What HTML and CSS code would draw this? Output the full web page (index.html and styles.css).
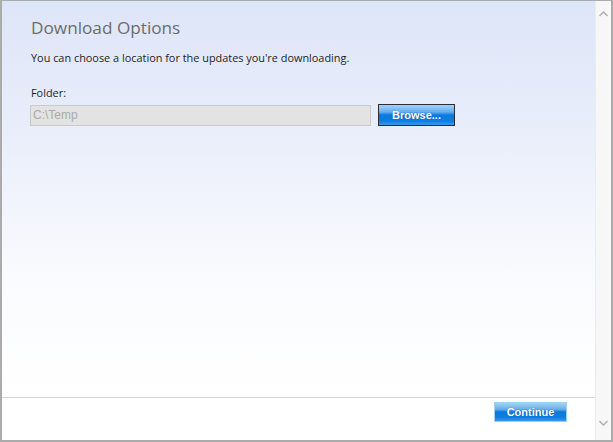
FILE: index.html
```html
<!DOCTYPE html>
<html>
<head>
<meta charset="utf-8">
<link rel="stylesheet" href="styles.css">
</head>
<body>
<div class="window">
  <div class="main">
    <div class="content">
      <h1 class="title">Download Options</h1>
      <p class="intro">You can choose a location for the updates you're downloading.</p>
      <label class="label">Folder:</label>
      <div class="folder-row">
        <div class="input">C:\Temp</div>
        <button class="btn btn-focus">Browse...</button>
      </div>
    </div>
    <div class="footer">
      <button class="btn btn-continue">Continue</button>
    </div>
  </div>
  <div class="scrollbar">
    <svg class="arrow" width="9" height="6" viewBox="0 0 9 6"><path d="M0.5 5 L4.5 1 L8.5 5" fill="none" stroke="#b4b4b4" stroke-width="1.6"/></svg>
    <svg class="arrow" width="9" height="6" viewBox="0 0 9 6"><path d="M0.5 1 L4.5 5 L8.5 1" fill="none" stroke="#b4b4b4" stroke-width="1.6"/></svg>
  </div>
</div>
</body>
</html>
```
FILE: styles.css
```css
html, body {
  margin: 0;
  padding: 0;
  background: #ffffff;
}
.window {
  width: 613px;
  height: 442px;
  box-sizing: border-box;
  border-top: 1px solid #ababab;
  border-left: 2px solid #ababab;
  border-right: 2px solid #ababab;
  border-bottom: 2px solid #ababab;
  display: flex;
  font-family: "Open Sans", "Noto Sans", sans-serif;
}
.main {
  flex: 1;
  display: flex;
  flex-direction: column;
}
.content {
  flex: 1;
  padding: 0 0 0 28px;
  background: linear-gradient(to bottom, #dde5f8 0%, #e8edfa 30%, #fafbfe 70%, #ffffff 100%);
}
.title {
  margin: 14px 0 0 1px;
  font-weight: normal;
  font-size: 17.2px;
  line-height: 26px;
  color: #6d6d6d;
}
.intro {
  margin: 9px 0 0 1px;
  font-size: 10.9px;
  line-height: 16px;
  color: #1e1e1e;
}
.label {
  display: block;
  margin: 19px 0 0 1px;
  font-size: 10.9px;
  line-height: 16px;
  color: #1e1e1e;
}
.folder-row {
  display: flex;
  align-items: center;
  gap: 7px;
  margin-top: 3px;
}
.input {
  width: 337px;
  height: 19px;
  box-sizing: content-box;
  border: 1px solid #c9c9c9;
  background: #e3e3e3;
  color: #ababab;
  font-family: "Liberation Sans", Arial, sans-serif;
  font-size: 12px;
  line-height: 19px;
  padding-left: 2px;
}
.btn {
  font-family: "Liberation Sans", Arial, sans-serif;
  font-weight: bold;
  font-size: 11px;
  color: #ffffff;
  padding: 0;
  background: linear-gradient(to bottom, #a4d2f8 0%, #63aef0 35%, #0b78dc 50%, #0e7fe2 80%, #3a99ec 100%);
  text-shadow: 0 0 1px rgba(0,40,110,0.5);
}
.btn-focus {
  width: 77px;
  height: 22px;
  border: 1px solid #2a2d33;
}
.footer {
  height: 43px;
  border-top: 1px solid #d6d6d6;
  background: #ffffff;
  display: flex;
  justify-content: flex-end;
  align-items: flex-start;
  padding: 4px 28px 0 0;
  box-sizing: border-box;
}
.btn-continue {
  width: 73px;
  height: 20px;
  border: 1px solid #9bd0f7;
}
.scrollbar {
  width: 15px;
  background: #f7f7f7;
  border-left: 1px solid #ececec;
  display: flex;
  flex-direction: column;
  justify-content: space-between;
  align-items: center;
  padding: 10px 0 14px 0;
}
.arrow {
  display: block;
}
```
